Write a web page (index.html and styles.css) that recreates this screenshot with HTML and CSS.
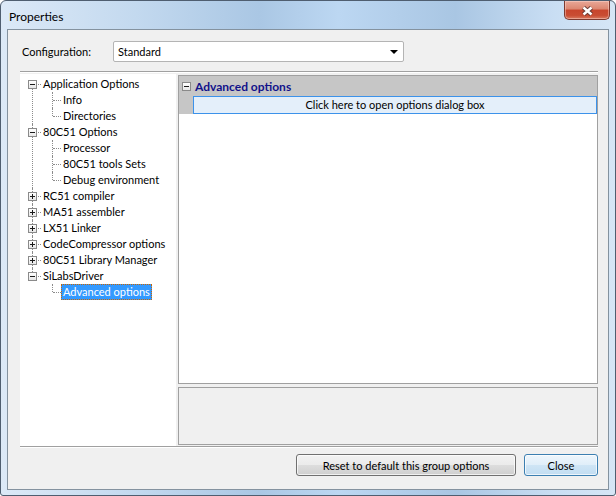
FILE: index.html
```html
<!DOCTYPE html>
<html lang="en">
  <head>
    <meta charset="UTF-8" />
    <title>Properties</title>
    <link rel="stylesheet" href="styles.css">
  </head>
  <body>
    <div class="window">
      <div class="titlebar">
        <span class="title">Properties</span>
        <div class="close-btn">
          <svg width="13" height="10" viewBox="0 0 13 10">
            <path d="M2.5 1.5 L10.5 8.5 M10.5 1.5 L2.5 8.5" stroke="#6a3a33" stroke-width="4.4" fill="none"/>
            <path d="M2.5 1.5 L10.5 8.5 M10.5 1.5 L2.5 8.5" stroke="#fff" stroke-width="2.4" fill="none"/>
          </svg>
        </div>
      </div>

      <div class="client">
        <div class="config-row">
          <span class="config-label">Configuration:</span>
          <div class="combo">
            <span>Standard</span>
            <span class="combo-arrow"></span>
          </div>
        </div>

        <div class="sep"></div>

        <div class="main">
          <div class="tree">
            <ul class="tree-root">
              <li>
                <div class="item"><span class="exp"></span><span class="label">Application Options</span></div>
                <ul>
                  <li><div class="item"><span class="label">Info</span></div></li>
                  <li><div class="item"><span class="label">Directories</span></div></li>
                </ul>
              </li>
              <li>
                <div class="item"><span class="exp"></span><span class="label">80C51 Options</span></div>
                <ul>
                  <li><div class="item"><span class="label">Processor</span></div></li>
                  <li><div class="item"><span class="label">80C51 tools Sets</span></div></li>
                  <li><div class="item"><span class="label">Debug environment</span></div></li>
                </ul>
              </li>
              <li><div class="item"><span class="exp plus"></span><span class="label">RC51 compiler</span></div></li>
              <li><div class="item"><span class="exp plus"></span><span class="label">MA51 assembler</span></div></li>
              <li><div class="item"><span class="exp plus"></span><span class="label">LX51 Linker</span></div></li>
              <li><div class="item"><span class="exp plus"></span><span class="label">CodeCompressor options</span></div></li>
              <li><div class="item"><span class="exp plus"></span><span class="label">80C51 Library Manager</span></div></li>
              <li>
                <div class="item"><span class="exp"></span><span class="label">SiLabsDriver</span></div>
                <ul>
                  <li><div class="item"><span class="label selected">Advanced options</span></div></li>
                </ul>
              </li>
            </ul>
          </div>

          <div class="right">
            <div class="grid">
              <div class="cat-row">
                <span class="exp"></span>
                <span class="cat-title">Advanced options</span>
              </div>
              <div class="opt-row">
                <div class="opt-btn">Click here to open options dialog box</div>
              </div>
            </div>
            <div class="desc"></div>
          </div>
        </div>

        <div class="sep"></div>

        <div class="buttons">
          <button class="btn reset">Reset to default this group options</button>
          <button class="btn default">Close</button>
        </div>
      </div>
    </div>
  </body>
</html>
```

FILE: styles.css
```css
html,
body {
  margin: 0;
  padding: 0;
  overflow: hidden;
  background: #fff;
}
body {
  font-family: Lato, "Liberation Sans", sans-serif;
  font-size: 11px;
  color: #000;
}

/* window frame */
.window {
  box-sizing: border-box;
  width: 616px;
  height: 496px;
  border: 1px solid #4f5e70;
  border-radius: 6px 6px 3px 3px;
  padding: 0 6px 5px 6px;
  display: flex;
  flex-direction: column;
  background: linear-gradient(90deg, #dce9f7 0%, #c3d9ef 22%, #aac7e4 42%, #bcd7f2 55%, #a9c6e3 74%, #c9def3 90%, #d6e6f6 100%);
}
.titlebar {
  height: 28px;
  display: flex;
  align-items: flex-start;
  justify-content: space-between;
  padding-left: 2px;
  margin-right: -1px;
}
.title {
  font-size: 12px;
  line-height: 12px;
  margin-top: 10px;
  color: #000;
}
.close-btn {
  box-sizing: border-box;
  width: 46px;
  height: 19px;
  margin-top: 0;
  border: 1px solid #7c3a30;
  border-top: none;
  border-radius: 0 0 5px 5px;
  background: linear-gradient(#e9a898 0%, #dc8670 45%, #c8452c 50%, #c94d33 80%, #d87a60 100%);
  display: flex;
  align-items: center;
  justify-content: center;
  box-shadow: inset 0 0 0 1px rgba(255, 220, 210, 0.45);
}
.close-btn svg {
  display: block;
  margin-top: 1px;
}

.client {
  box-sizing: border-box;
  height: 461px;
  border: 1px solid #84929f;
  background: #f0f0f0;
  padding: 11px 10px 13px 12px;
  display: flex;
  flex-direction: column;
}

/* configuration */
.config-row {
  height: 21px;
  display: flex;
  align-items: center;
  padding-left: 2px;
}
.config-label {
  width: 91px;
}
.combo {
  box-sizing: border-box;
  width: 291px;
  height: 21px;
  border: 1px solid #b4b4b4;
  border-radius: 2px;
  background: #fff;
  display: flex;
  align-items: center;
  justify-content: space-between;
  padding: 0 5px 0 4px;
}
.combo-arrow {
  width: 0;
  height: 0;
  border-left: 4px solid transparent;
  border-right: 4px solid transparent;
  border-top: 4px solid #000;
  margin-top: 1px;
}

.sep {
  border-top: 1px solid #a0a0a0;
  border-bottom: 1px solid #fff;
  margin-top: 9px;
}

/* tree + grid */
.main {
  display: flex;
  gap: 2px;
  height: 372px;
  margin-top: 1px;
}
.main + .sep {
  margin-top: 0;
}
.tree {
  width: 156px;
  background: #fff;
  padding-top: 2px;
}
.tree ul {
  list-style: none;
  margin: 0;
  padding: 0 0 0 2px;
}
.tree .tree-root {
  padding-left: 3px;
}
.tree li {
  position: relative;
  padding-left: 18px;
}
.tree li::before {
  content: "";
  position: absolute;
  left: 9px;
  top: 0;
  bottom: 0;
  border-left: 1px dotted #8c8c8c;
}
.tree li:last-child::before {
  bottom: auto;
  height: 8px;
}
.tree-root > li:first-child::before {
  top: 8px;
}
.tree li::after {
  content: "";
  position: absolute;
  left: 10px;
  top: 8px;
  width: 8px;
  border-top: 1px dotted #8c8c8c;
}
.item {
  height: 16px;
  display: flex;
  align-items: center;
}
.label {
  box-sizing: border-box;
  height: 16px;
  line-height: 14px;
  padding: 0 1px;
  border: 1px solid transparent;
  white-space: nowrap;
}
.label.selected {
  background: #3399ff;
  color: #fff;
  border: 1px dotted #cc6600;
}

.exp {
  position: absolute;
  z-index: 1;
  left: 5px;
  top: 4px;
  box-sizing: border-box;
  width: 9px;
  height: 9px;
  border: 1px solid #8a8a8a;
  background: linear-gradient(#fff, #e6e6e6);
}
.exp::before {
  content: "";
  position: absolute;
  left: 1px;
  top: 3px;
  width: 5px;
  height: 1px;
  background: #1a1a1a;
}
.exp.plus::after {
  content: "";
  position: absolute;
  left: 3px;
  top: 1px;
  width: 1px;
  height: 5px;
  background: #1a1a1a;
}

.right {
  width: 420px;
  padding-top: 1px;
  display: flex;
  flex-direction: column;
  gap: 3px;
}
.grid {
  box-sizing: border-box;
  height: 309px;
  border: 1px solid #a0a0a0;
  background: #fff;
}
.cat-row {
  position: relative;
  height: 20px;
  background: #c6c6c6;
  display: flex;
  align-items: center;
  padding-left: 16px;
}
.cat-row .exp {
  left: 3px;
  top: 6px;
}
.cat-title {
  font-size: 12px;
  font-weight: bold;
  color: #11118a;
}
.opt-row {
  background: #c6c6c6;
  padding-left: 14px;
}
.opt-btn {
  box-sizing: border-box;
  height: 18px;
  border: 1px solid #3c92ea;
  background: #e4effa;
  text-align: center;
  line-height: 16px;
}
.desc {
  box-sizing: border-box;
  height: 58px;
  border: 1px solid #a0a0a0;
  background: #f0f0f0;
}

/* buttons */
.buttons {
  display: flex;
  justify-content: flex-end;
  gap: 8px;
  margin-top: 6px;
}
.btn {
  box-sizing: border-box;
  height: 22px;
  font-family: Lato, "Liberation Sans", sans-serif;
  font-size: 11px;
  color: #000;
  border: 1px solid #707070;
  border-radius: 3px;
  background: linear-gradient(#f2f2f2 0%, #ebebeb 50%, #dddddd 51%, #cfcfcf 100%);
  box-shadow: inset 0 0 0 1px rgba(255, 255, 255, 0.7);
  padding: 0;
}
.btn.reset {
  width: 220px;
}
.btn.default {
  width: 74px;
  border-color: #3c7fb1;
  background: linear-gradient(#eef6fc 0%, #e0eef9 50%, #cfe5f5 51%, #c2ddf2 100%);
}
```
